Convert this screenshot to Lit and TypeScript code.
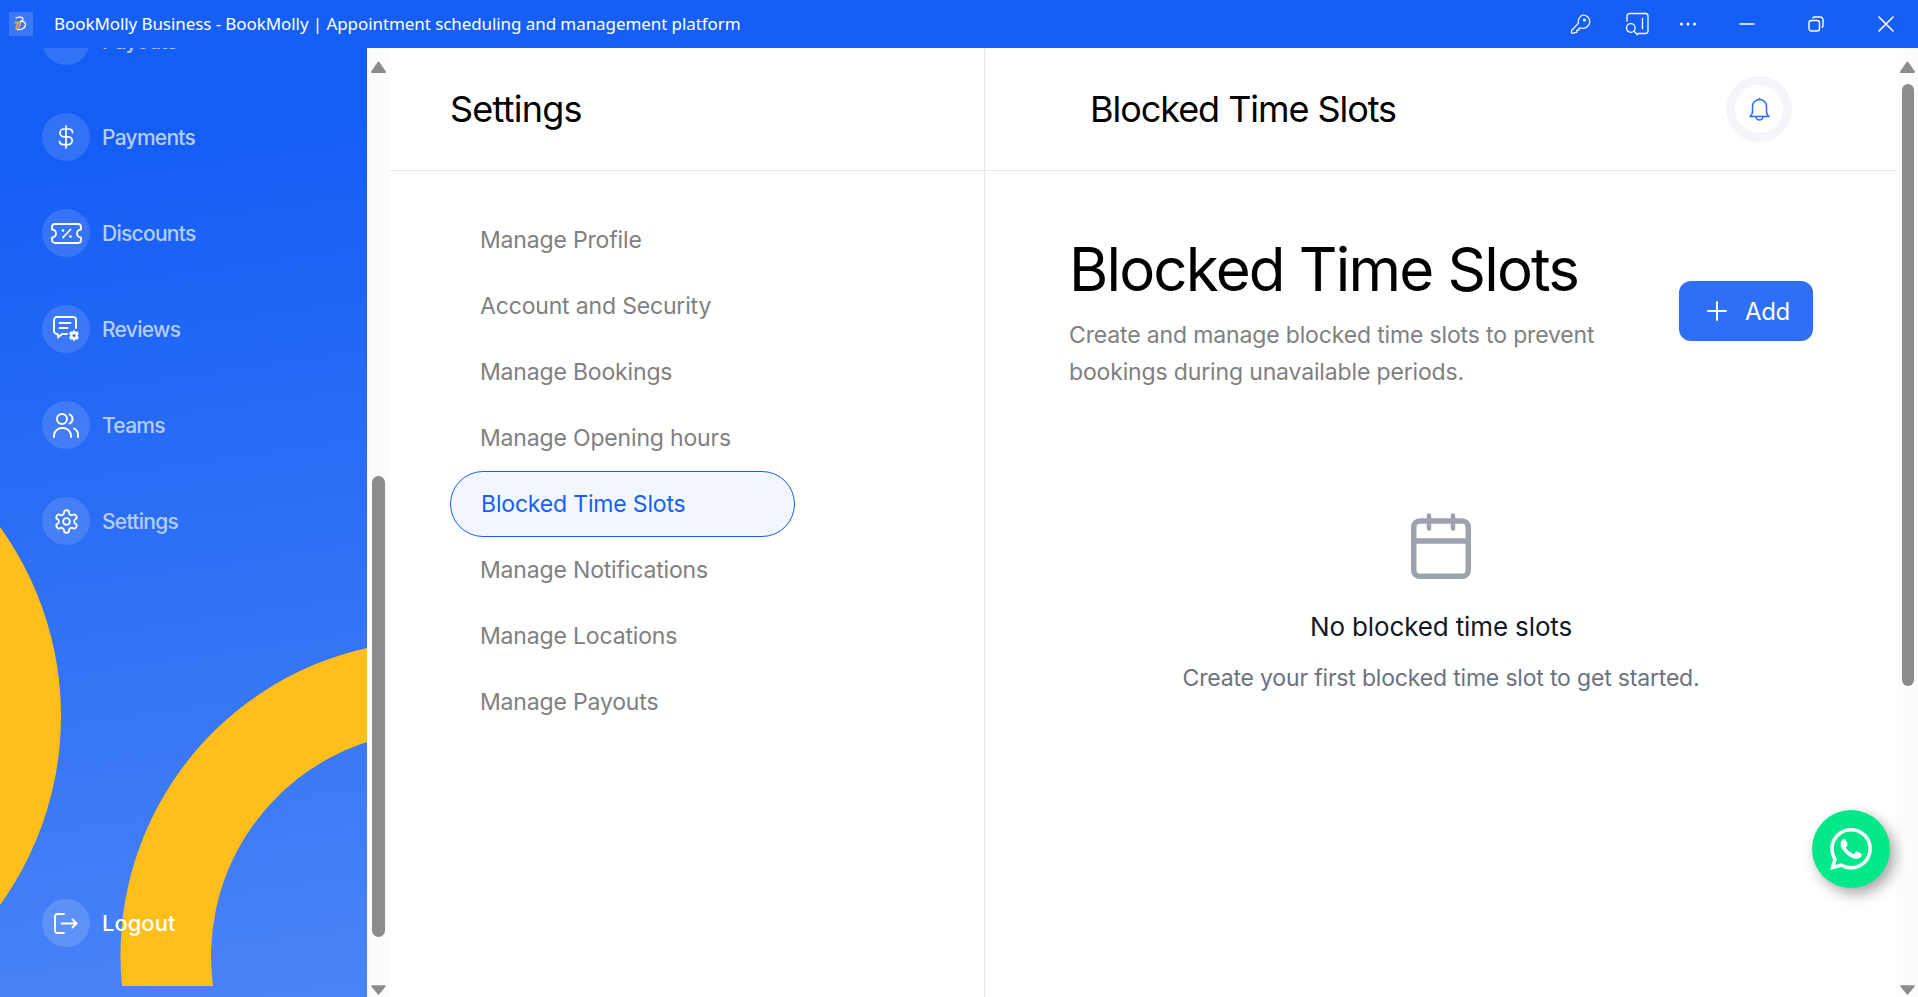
import { LitElement, html, css, svg } from "lit";
import { customElement } from "lit/decorators.js";

const ic = (w: number, h: number, vb: string, body: unknown, cls = "") =>
  html`<svg class=${cls} width=${w} height=${h} viewBox=${vb} fill="none" stroke="currentColor" stroke-linecap="round" stroke-linejoin="round">${body}</svg>`;

const icons: Record<string, unknown> = {
  payouts: ic(24, 24, "0 0 24 24", svg`<path stroke-width="2.2" d="M9 3l3 5 3-5"/>`),
  payments: ic(16, 24, "0 0 16 24", svg`<g stroke-width="1.7"><path d="M8 1v22"/><path d="M14.500 7.500C14.500 5.200 12.800 4 10.800 4H6a3.800 3.800 0 0 0-.2 7.800h4.400a3.800 3.800 0 0 1 .2 7.800H5.500C3.200 19.600 1.500 18.400 1.500 16.300"/></g>`),
  discounts: ic(31, 21, "0 0 31 21", svg`<g stroke-width="1.8"><path d="M4 1h23a3 3 0 0 1 3 3v2.500a4 4 0 0 0 0 8V17a3 3 0 0 1-3 3H4a3 3 0 0 1-3-3v-2.500a4 4 0 0 0 0-8V4a3 3 0 0 1 3-3z"/><path d="M19.500 6.500l-7.500 8"/></g><g fill="currentColor" stroke="none"><circle cx="12" cy="7.500" r="1.300"/><circle cx="19.500" cy="13.500" r="1.300"/></g>`),
  reviews: ic(27, 26, "0 0 27 26", svg`<g stroke-width="1.9"><path d="M14 18H9l-4 3.500-.3-3.500H4a3 3 0 0 1-3-3V4a3 3 0 0 1 3-3h16a3 3 0 0 1 3 3v8"/><path d="M6.500 7h11"/><path d="M6.500 12h8"/></g><path fill="currentColor" stroke="none" d="M21 13.500l1.200 2.100 2.400-.1 1.200 2-1.200 2 1.200 2-1.200 2-2.400-.1L21 25.500l-1.200-2.100-2.400.1-1.200-2 1.200-2-1.200-2 1.200-2 2.400.1z"/><circle cx="21" cy="19.500" r="1.600" fill="#3b78f6" stroke="none"/>`),
  teams: ic(26, 25, "0 0 26 25", svg`<g stroke-width="1.9"><circle cx="9" cy="6" r="5"/><path d="M16.500 1.400a5 5 0 0 1 0 9.200"/><path d="M1 24v-2a8 8 0 0 1 8-7h1a8 8 0 0 1 8 7v2"/><path d="M21 15.500a7 7 0 0 1 4 6.500v2"/></g>`),
  settings: ic(27, 27, "0 0 24 24", svg`<g stroke-width="1.6"><path d="M12.220 2h-.44a2 2 0 0 0-2 2v.18a2 2 0 0 1-1 1.730l-.43.25a2 2 0 0 1-2 0l-.15-.08a2 2 0 0 0-2.730.73l-.22.38a2 2 0 0 0 .73 2.730l.15.1a2 2 0 0 1 1 1.720v.51a2 2 0 0 1-1 1.740l-.15.09a2 2 0 0 0-.73 2.730l.22.38a2 2 0 0 0 2.730.73l.15-.08a2 2 0 0 1 2 0l.43.25a2 2 0 0 1 1 1.730V20a2 2 0 0 0 2 2h.44a2 2 0 0 0 2-2v-.18a2 2 0 0 1 1-1.730l.43-.25a2 2 0 0 1 2 0l.15.08a2 2 0 0 0 2.730-.73l.22-.39a2 2 0 0 0-.73-2.730l-.15-.08a2 2 0 0 1-1-1.740v-.5a2 2 0 0 1 1-1.740l.15-.09a2 2 0 0 0 .73-2.730l-.22-.38a2 2 0 0 0-2.730-.73l-.15.08a2 2 0 0 1-2 0l-.43-.25a2 2 0 0 1-1-1.730V4a2 2 0 0 0-2-2z"/><circle cx="12" cy="12" r="3"/></g>`),
  logout: ic(24, 21, "0 0 24 21", svg`<g stroke-width="1.900"><path d="M10 1H3.500A2.500 2.500 0 0 0 1 3.500v14A2.500 2.500 0 0 0 3.500 20H10"/><path d="M7.500 10.500H22.500"/><path d="M18.500 6.500l4 4-4 4"/></g>`),
};

const menu = ["Manage Profile", "Account and Security", "Manage Bookings", "Manage Opening hours", "Blocked Time Slots", "Manage Notifications", "Manage Locations", "Manage Payouts"];
const side = [
  ["payouts", "Payouts"],
  ["payments", "Payments"],
  ["discounts", "Discounts"],
  ["reviews", "Reviews"],
  ["teams", "Teams"],
  ["settings", "Settings"],
];

const upArrow = html`<svg class="arrow" width="15" height="12" viewBox="0 0 15 12"><path fill="#8c8c8c" stroke="#8c8c8c" stroke-width="2" stroke-linejoin="round" d="M7.500 1.500L14 11H1z"/></svg>`;
const downArrow = html`<svg class="arrow" width="15" height="10" viewBox="0 0 15 10"><path fill="#8c8c8c" stroke="#8c8c8c" stroke-width="1.500" stroke-linejoin="round" d="M1 1h13L7.500 9z"/></svg>`;

@customElement("app-root")
export class AppRoot extends LitElement {
  static styles = css`
    :host { display: block; width: 1918px; height: 997px; overflow: hidden; font-family: Inter, "Liberation Sans", sans-serif; background: #fff; position: relative; }
    * { box-sizing: border-box; }
    .shell { display: flex; flex-direction: column; height: 997px; }

    .titlebar { flex: 0 0 48px; height: 48px; background: #155ff6; color: #fff; display: flex; align-items: center; position: relative; z-index: 3; }
    .app-logo { width: 24px; height: 24px; margin-left: 9px; background: #3a78f7; display: flex; align-items: center; justify-content: center; }
    .app-title { margin-left: 21px; margin-top: -2px; font-family: "Noto Sans", "Open Sans", sans-serif; font-size: 17px; letter-spacing: -0.08px; white-space: nowrap; }
    .win { margin-left: auto; display: flex; align-items: center; height: 48px; }
    .win > span { display: flex; align-items: center; justify-content: center; }
    .w-key { width: 40px; margin-right: 17px; }
    .w-read { width: 40px; margin-right: 11px; }
    .w-dots { width: 40px; margin-right: 19px; }
    .w-min { width: 40px; margin-right: 29px; }
    .w-res { width: 40px; margin-right: 30px; }
    .w-close { width: 40px; margin-right: 12px; }

    .body { flex: 1; display: flex; min-height: 0; }

    .sidebar { flex: 0 0 367px; position: relative; overflow: hidden; background: linear-gradient(172deg, #145df5 10%, #4a84f6 100%); display: flex; flex-direction: column; }
    .deco { position: absolute; left: 0; top: 0; pointer-events: none; }
    .nav { position: relative; display: flex; flex-direction: column; gap: 48px; margin-top: -31px; }
    .nav-item { display: flex; align-items: center; gap: 12px; padding-left: 42px; height: 48px; font-size: 21px; letter-spacing: -0.72px; color: #b5cdfc; font-weight: 500; }
    .bubble { width: 48px; height: 48px; border-radius: 50%; background: rgba(255,255,255,.13); color: #fff; display: flex; align-items: center; justify-content: center; flex: none; }
    .logout { margin-top: auto; margin-bottom: 50px; color: #fff; position: relative; font-size: 22px; letter-spacing: 0; }
    .logout .bubble { background: rgba(255,255,255,.15); }

    .bar { flex: none; background: #fcfcfc; display: flex; flex-direction: column; align-items: center; }
    .bar .arrow { flex: none; display: block; }
    .bar-left { width: 23px; padding: 13px 0 2px; }
    .bar-left .thumb { margin-top: 403px; width: 13px; height: 461px; border-radius: 7px; background: #8c8c8c; }
    .bar-main { width: 21px; padding: 13px 0 2px; }
    .bar-main .thumb { margin-top: 11px; width: 12px; height: 602px; border-radius: 6px; background: #8c8c8c; }
    .bar .arrow.end { margin-top: auto; }

    .pane-settings { flex: 0 0 595px; border-right: 1px solid #e8e8e8; display: flex; flex-direction: column; }
    .pane-main { flex: 1; display: flex; flex-direction: column; min-width: 0; position: relative; }
    .head { flex: 0 0 123px; border-bottom: 1px solid #e8e8e8; display: flex; align-items: center; }
    .pane-settings .head { padding-left: 60px; }
    .pane-main .head { padding-left: 105px; padding-right: 105px; justify-content: space-between; }
    .head-title { font-size: 36px; font-weight: 400; letter-spacing: -0.75px; color: #000; }
    .pane-main .head-title { letter-spacing: -1.05px; }

    .menu { padding: 36px 0 0 60px; display: flex; flex-direction: column; }
    .menu-item { width: 345px; height: 66px; display: flex; align-items: center; padding-left: 30px; font-size: 23px; color: #808080; letter-spacing: -0.17px; }
    .menu-item.active { color: #155ff6; background: #f2f7fe; border: 1px solid #155ff6; border-radius: 33px; }

    .bell { width: 66px; height: 66px; border-radius: 50%; border: 9px solid #f3f5fa; background: #fff; color: #2c6ff5; display: flex; align-items: center; justify-content: center; }

    .content { padding: 64px 84px 0 84px; }
    .top { display: flex; justify-content: space-between; align-items: center; }
    .page-title { margin: 0 0 14px; font-size: 60px; line-height: 68px; font-weight: 400; letter-spacing: -1.8px; color: #000; }
    .page-desc { margin: 0; width: 560px; font-size: 23px; line-height: 36.5px; color: #808080; letter-spacing: -0.15px; }
    .add { width: 134px; height: 60px; margin-bottom: 3px; padding: 0 0 0 28px; border: 0; border-radius: 12px; background: #2f6ff5; color: #fff; display: flex; align-items: center; justify-content: flex-start; gap: 18px; font: 400 24px Inter, sans-serif; letter-spacing: -0.4px; }

    .empty { margin-top: 123px; display: flex; flex-direction: column; align-items: center; }
    .empty svg { color: #9ca3af; display: block; }
    .empty-title { margin-top: 31px; font-size: 26px; line-height: 34px; color: #111827; letter-spacing: -0.13px; }
    .empty-sub { margin-top: 17px; font-size: 23px; line-height: 34px; color: #6b7280; letter-spacing: -0.18px; }

    .whatsapp { position: absolute; left: 1812px; top: 810px; width: 78px; height: 78px; border-radius: 50%; background: #00e88a; box-shadow: 5px 6px 14px rgba(0,0,0,.35); display: flex; align-items: center; justify-content: center; z-index: 2; }
  `;

  render() {
    return html`
      <div class="shell">
        <div class="titlebar">
          <div class="app-logo">
            <svg width="18" height="18" viewBox="0 0 18 18" fill="none" stroke-linecap="round">
              <path stroke="#fff" stroke-width="1.300" d="M4 3c3-1.500 7-1.200 7 1.200 0 1.300-1.500 2-3 2.300 3-.3 6 .6 5.500 3.600C13 13.500 9 15 5.500 14.500"/>
              <path stroke="#f5b921" stroke-width="1.400" d="M3 7.500h5M6 7.500L4 14M8.500 8L7 13"/>
            </svg>
          </div>
          <div class="app-title">BookMolly Business - BookMolly | Appointment scheduling and management platform</div>
          <div class="win">
            <span class="w-key">${ic(21, 21, "0 0 21 21", svg`<g stroke-width="1.200"><path d="M13 1a6.800 6.800 0 0 1 6.800 6.800A6.800 6.800 0 0 1 11 14l-2 .1-.1 2-2 .1-.1 2.200-2 .1-.6.6H1.500v-2.600l7-7.300A6.800 6.800 0 0 1 13 1z"/><circle cx="14.500" cy="6" r="1"/></g>`)}</span>
            <span class="w-read">${ic(24, 24, "0 0 24 24", svg`<g stroke-width="1.300"><path d="M2 9V4a2.500 2.500 0 0 1 2.500-2.500h16A2.500 2.500 0 0 1 23 4v15a2.500 2.500 0 0 1-2.500 2.500H13"/><path d="M17.500 6.500v10"/><circle cx="5.800" cy="16" r="4.300"/><path d="M9 19.200l3.500 3.500"/></g>`)}</span>
            <span class="w-dots">${ic(18, 4, "0 0 18 4", svg`<g fill="currentColor" stroke="none"><circle cx="2.500" cy="2" r="1.500"/><circle cx="9" cy="2" r="1.500"/><circle cx="15.500" cy="2" r="1.500"/></g>`)}</span>
            <span class="w-min">${ic(16, 2, "0 0 16 2", svg`<path stroke-width="1.600" d="M1 1h14"/>`)}</span>
            <span class="w-res">${ic(16, 16, "0 0 16 16", svg`<g stroke-width="1.400"><rect x="1" y="4.500" width="10.500" height="10.500" rx="2.500"/><path d="M4.800 1.800A2.500 2.500 0 0 1 6.800 1h5.400A2.800 2.800 0 0 1 15 3.800v5.400a2.500 2.500 0 0 1-.8 2"/></g>`)}</span>
            <span class="w-close">${ic(16, 16, "0 0 16 16", svg`<path stroke-width="1.600" d="M1 1l14 14M15 1L1 15"/>`)}</span>
          </div>
        </div>

        <div class="body">
          <aside class="sidebar">
            <svg class="deco" width="367" height="949" viewBox="0 48 367 949">
              <circle cx="-262" cy="716" r="323" fill="#ffbe1a"/>
              <path fill="#ffbe1a" d="M122 986A314.600 314.600 0 0 1 367 648V742A225 225 0 0 0 213 986Z"/>
            </svg>
            <nav class="nav">
              ${side.map(([k, t]) => html`<div class="nav-item"><span class="bubble">${icons[k]}</span><span>${t}</span></div>`)}
            </nav>
            <div class="nav-item logout"><span class="bubble">${icons.logout}</span><span>Logout</span></div>
          </aside>

          <div class="bar bar-left">
            ${upArrow}
            <div class="thumb"></div>
            <span class="arrow end">${downArrow}</span>
          </div>

          <section class="pane-settings">
            <div class="head"><div class="head-title">Settings</div></div>
            <div class="menu">
              ${menu.map((m) => html`<div class="menu-item ${m === "Blocked Time Slots" ? "active" : ""}">${m}</div>`)}
            </div>
          </section>

          <main class="pane-main">
            <div class="head">
              <div class="head-title">Blocked Time Slots</div>
              <div class="bell">
                ${ic(21, 25, "0 0 21 25", svg`<g stroke-width="1.500"><path d="M1 19.500c1.500-1 2.500-2.500 2.500-5V9.500a7 7 0 0 1 14 0v5c0 2.500 1 4 2.500 5z"/><path d="M10.500 2.500V1.500"/><path d="M7 19.500a3.500 3.500 0 0 0 7 0"/></g>`)}
              </div>
            </div>
            <div class="content">
              <div class="top">
                <div>
                  <h1 class="page-title">Blocked Time Slots</h1>
                  <p class="page-desc">Create and manage blocked time slots to prevent bookings during unavailable periods.</p>
                </div>
                <button class="add">
                  ${ic(20, 20, "0 0 20 20", svg`<path stroke-width="2" d="M10 1v18M1 10h18"/>`)}
                  <span>Add</span>
                </button>
              </div>
              <div class="empty">
                ${ic(60, 66, "0 0 60 66", svg`<g stroke-width="5.500"><rect x="2.750" y="8" width="54.500" height="55.250" rx="6"/><path d="M2.750 28h54.500"/><path stroke-width="4.500" d="M18 2.500v13M42 2.500v13"/></g>`)}
                <div class="empty-title">No blocked time slots</div>
                <div class="empty-sub">Create your first blocked time slot to get started.</div>
              </div>
            </div>
          </main>

          <div class="bar bar-main">
            ${upArrow}
            <div class="thumb"></div>
            <span class="arrow end">${downArrow}</span>
          </div>
        </div>
      </div>
      <a class="whatsapp">
        <svg width="42" height="42" viewBox="0 0 24 24" fill="#fff"><path d="M17.472 14.382c-.297-.149-1.758-.867-2.03-.967-.273-.099-.471-.148-.67.15-.197.297-.767.966-.94 1.164-.173.199-.347.223-.644.075-.297-.15-1.255-.463-2.39-1.475-.883-.788-1.48-1.761-1.653-2.059-.173-.297-.018-.458.13-.606.134-.133.298-.347.446-.52.149-.174.198-.298.298-.497.099-.198.05-.371-.025-.52-.075-.149-.669-1.612-.916-2.207-.242-.579-.487-.5-.669-.51-.173-.008-.371-.01-.57-.01-.198 0-.52.074-.792.372-.272.297-1.04 1.016-1.04 2.479 0 1.462 1.065 2.875 1.213 3.074.149.198 2.096 3.2 5.077 4.487.709.306 1.262.489 1.694.625.712.227 1.36.195 1.871.118.571-.085 1.758-.719 2.006-1.413.248-.694.248-1.289.173-1.413-.074-.124-.272-.198-.57-.347m-5.421 7.403h-.004a9.87 9.87 0 01-5.031-1.378l-.361-.214-3.741.982.998-3.648-.235-.374a9.86 9.86 0 01-1.51-5.26c.001-5.45 4.436-9.884 9.888-9.884 2.64 0 5.122 1.03 6.988 2.898a9.825 9.825 0 012.893 6.994c-.003 5.45-4.437 9.884-9.885 9.884m8.413-18.297A11.815 11.815 0 0012.05 0C5.495 0 .16 5.335.157 11.892c0 2.096.547 4.142 1.588 5.945L.057 24l6.305-1.654a11.882 11.882 0 005.683 1.448h.005c6.554 0 11.89-5.335 11.893-11.893a11.821 11.821 0 00-3.48-8.413z"/></svg>
      </a>
    `;
  }
}
